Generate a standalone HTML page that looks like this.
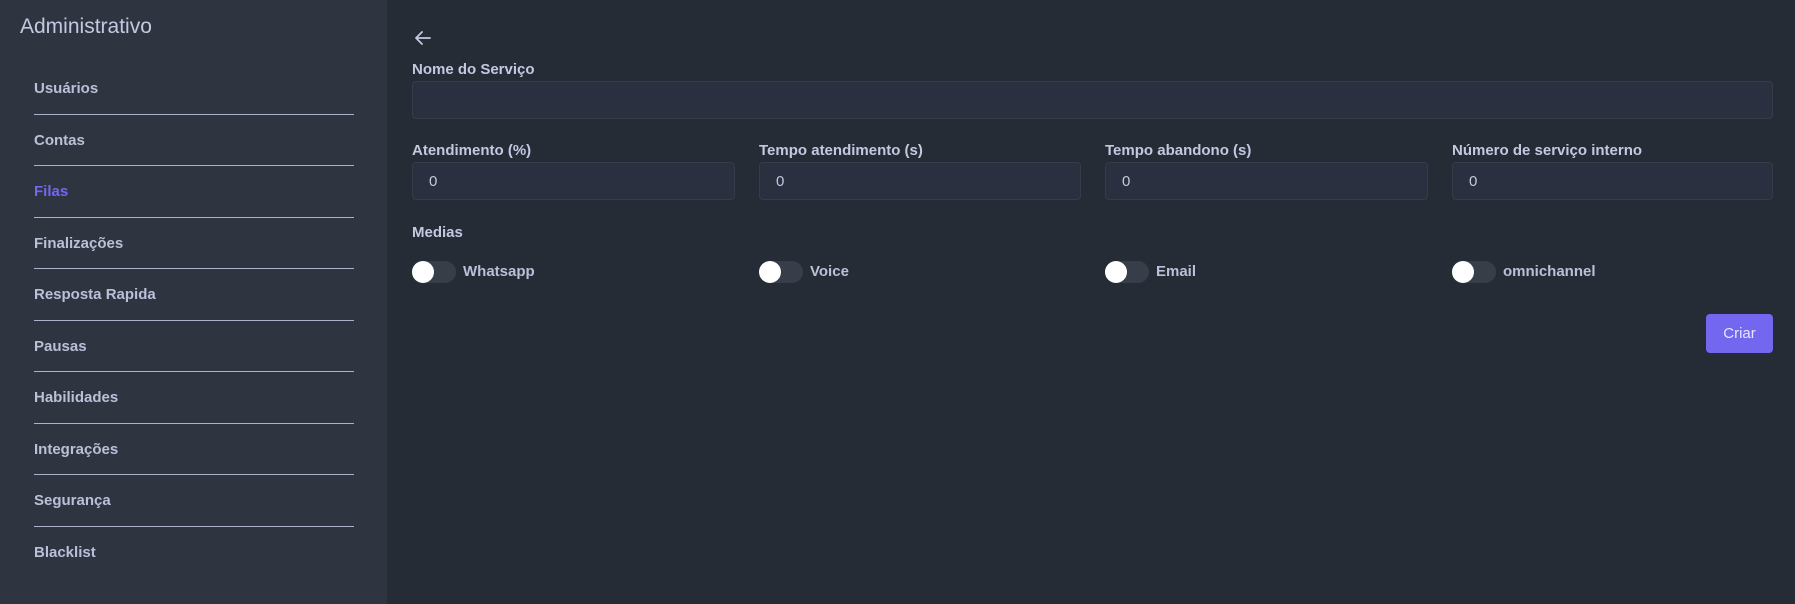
<!DOCTYPE html>
<html><head><meta charset="utf-8"><style>
*{box-sizing:border-box;margin:0;padding:0}
body{width:1795px;height:604px;background:#262c35;font-family:"Liberation Sans",sans-serif;position:relative;overflow:hidden;color:#c3c9e0}
.side{position:absolute;left:0;top:0;width:387px;height:604px;background:#2f3540}
.title{position:absolute;left:20px;top:15px;font-size:21px;color:#c3c9e0;font-weight:500}
.item{position:absolute;left:34px;width:320px;height:51.5px;border-bottom:1px solid #aab2cc;font-size:15px;font-weight:bold;color:#b9c0d8}
.item span{position:absolute;left:0;top:17px}
.item.act{color:#7367f0}
.lbl{position:absolute;font-size:15px;font-weight:bold;color:#c3c9e0}
.inp{position:absolute;height:38px;background:#2a3040;border:1px solid #353c4a;border-radius:4px;font-size:15px;color:#c3c9e0;padding:10px 16px}
.tg{position:absolute;width:44px;height:22px;border-radius:11px;background:#373e4a}
.tg::before{content:"";position:absolute;left:0;top:0;width:22px;height:22px;border-radius:50%;background:#fff}
.tl{position:absolute;font-size:15px;font-weight:bold;color:#b9c0d8}
.btn{position:absolute;left:1706px;top:314px;width:67px;height:39px;background:#7367f0;border-radius:4px;color:#e8e6ff;font-size:15px;text-align:center;line-height:39px}
</style></head><body>
<div class="side">
<div class="title">Administrativo</div>
<div class="item" style="top:63px"><span>Usuários</span></div>
<div class="item" style="top:114.5px"><span>Contas</span></div>
<div class="item act" style="top:166px"><span>Filas</span></div>
<div class="item" style="top:217.5px"><span>Finalizações</span></div>
<div class="item" style="top:269px"><span>Resposta Rapida</span></div>
<div class="item" style="top:320.5px"><span>Pausas</span></div>
<div class="item" style="top:372px"><span>Habilidades</span></div>
<div class="item" style="top:423.5px"><span>Integrações</span></div>
<div class="item" style="top:475px"><span>Segurança</span></div>
<div class="item" style="top:526.5px;border:none"><span>Blacklist</span></div>
</div>
<svg style="position:absolute;left:414px;top:29px" width="18" height="18" viewBox="0 0 18 18"><path d="M16 9H2M8 3L2 9l6 6" stroke="#c3c9e0" stroke-width="1.8" fill="none" stroke-linecap="round" stroke-linejoin="round"/></svg>
<div class="lbl" style="left:412px;top:61px">Nome do Serviço</div>
<div class="inp" style="left:412px;top:81px;width:1361px"></div>
<div class="lbl" style="left:412px;top:142px">Atendimento (%)</div>
<div class="lbl" style="left:759px;top:142px">Tempo atendimento (s)</div>
<div class="lbl" style="left:1105px;top:142px">Tempo abandono (s)</div>
<div class="lbl" style="left:1452px;top:142px">Número de serviço interno</div>
<div class="inp" style="left:412px;top:162px;width:323px">0</div>
<div class="inp" style="left:759px;top:162px;width:322px">0</div>
<div class="inp" style="left:1105px;top:162px;width:323px">0</div>
<div class="inp" style="left:1452px;top:162px;width:321px">0</div>
<div class="lbl" style="left:412px;top:224px">Medias</div>
<div class="tg" style="left:412px;top:261px"></div><div class="tl" style="left:463px;top:263px">Whatsapp</div>
<div class="tg" style="left:759px;top:261px"></div><div class="tl" style="left:810px;top:263px">Voice</div>
<div class="tg" style="left:1105px;top:261px"></div><div class="tl" style="left:1156px;top:263px">Email</div>
<div class="tg" style="left:1452px;top:261px"></div><div class="tl" style="left:1503px;top:263px">omnichannel</div>
<div class="btn">Criar</div>
</body></html>
